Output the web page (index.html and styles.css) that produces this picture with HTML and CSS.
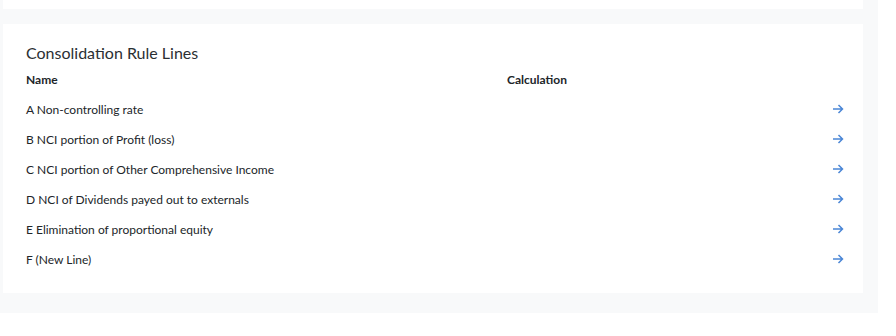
FILE: index.html
```html
<!DOCTYPE html>
<html lang="en">
<head>
  <meta charset="UTF-8" />
  <meta name="viewport" content="width=device-width, initial-scale=1.0" />
  <title>Consolidation Rule Lines</title>
  <link rel="stylesheet" href="styles.css">
</head>
<body>
  <main class="page">
    <!-- card above, scrolled mostly out of view -->
    <div class="card card-top"></div>

    <!-- Rule lines -->
    <div class="card">
      <h2 class="card-title">Consolidation Rule Lines</h2>
      <div class="rule-table">
        <div class="rule-row rule-head">
          <span>Name</span>
          <span>Calculation</span>
          <span></span>
        </div>
        <div class="rule-row">
          <span>A Non-controlling rate</span>
          <span></span>
          <a class="go" href="#"><svg viewBox="0 0 12 10" width="12" height="10"><path d="M1 5h9.5M6.5 1l4 4-4 4" /></svg></a>
        </div>
        <div class="rule-row">
          <span>B NCI portion of Profit (loss)</span>
          <span></span>
          <a class="go" href="#"><svg viewBox="0 0 12 10" width="12" height="10"><path d="M1 5h9.5M6.5 1l4 4-4 4" /></svg></a>
        </div>
        <div class="rule-row">
          <span>C NCI portion of Other Comprehensive Income</span>
          <span></span>
          <a class="go" href="#"><svg viewBox="0 0 12 10" width="12" height="10"><path d="M1 5h9.5M6.5 1l4 4-4 4" /></svg></a>
        </div>
        <div class="rule-row">
          <span>D NCI of Dividends payed out to externals</span>
          <span></span>
          <a class="go" href="#"><svg viewBox="0 0 12 10" width="12" height="10"><path d="M1 5h9.5M6.5 1l4 4-4 4" /></svg></a>
        </div>
        <div class="rule-row">
          <span>E Elimination of proportional equity</span>
          <span></span>
          <a class="go" href="#"><svg viewBox="0 0 12 10" width="12" height="10"><path d="M1 5h9.5M6.5 1l4 4-4 4" /></svg></a>
        </div>
        <div class="rule-row">
          <span>F (New Line)</span>
          <span></span>
          <a class="go" href="#"><svg viewBox="0 0 12 10" width="12" height="10"><path d="M1 5h9.5M6.5 1l4 4-4 4" /></svg></a>
        </div>
      </div>
    </div>
  </main>
</body>
</html>
```

FILE: styles.css
```css
* {
  margin: 0;
  padding: 0;
  box-sizing: border-box;
  font-family: 'Lato', 'Segoe UI', sans-serif;
}
body {
  background-color: #fff;
  color: #212529;
}
.page {
  width: 878px;
  background-color: #f8f9fa;
  padding: 0 15px 20px 3px;
  display: flex;
  flex-direction: column;
  gap: 15px;
}
.card {
  background-color: #fff;
  padding: 18px 18px 19px 23px;
}
.card-top {
  height: 9px;
  padding: 0;
}
.card-title {
  font-size: 16px;
  font-weight: 400;
  line-height: 21px;
  color: #2b2f33;
  margin-bottom: 1px;
}
.rule-row {
  display: grid;
  grid-template-columns: 481px 1fr 14px;
  align-items: center;
  height: 30px;
  font-size: 12px;
}
.rule-head {
  font-weight: 700;
}
.go {
  display: flex;
  align-items: center;
  justify-content: center;
}
.go svg {
  fill: none;
  stroke: #4a86d6;
  stroke-width: 1.5;
}
```
